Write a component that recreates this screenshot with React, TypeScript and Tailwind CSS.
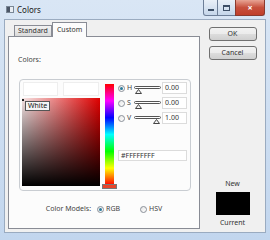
import React from 'react';

const font = "font-['Noto_Sans','Liberation_Sans',sans-serif]";

const Radio: React.FC<{ checked?: boolean }> = ({ checked }) => (
  <span className="w-[7px] h-[7px] rounded-full border border-[#8a8f98] bg-[linear-gradient(135deg,#e6e6e6,#ffffff)] flex items-center justify-center shrink-0">
    {checked && <span className="w-[3px] h-[3px] rounded-full bg-[#2b7a9c]" />}
  </span>
);

const Slider: React.FC<{ pos: 'left' | 'right' }> = ({ pos }) => (
  <div className={`w-[27px] h-[11px] flex flex-col ${pos === 'left' ? 'items-start' : 'items-end'}`}>
    <div className="w-[27px] h-[3px] mt-[3px] rounded-[2px] border border-[#555] bg-white" />
    <svg width="7" height="5" viewBox="0 0 7 5" className={pos === 'left' ? 'ml-[1px]' : 'mr-[1px]'}>
      <path d="M3.5 0.5 L6.5 4.5 L0.5 4.5 Z" fill="#f4f4f4" stroke="#444" strokeWidth="1" />
    </svg>
  </div>
);

const ValueRow: React.FC<{ letter: string; value: string; checked?: boolean; pos: 'left' | 'right' }> = ({
  letter,
  value,
  checked,
  pos,
}) => (
  <div className="flex items-center h-[12px]">
    <Radio checked={checked} />
    <span className="ml-[2px] w-[7px] text-[#444]">{letter}</span>
    <Slider pos={pos} />
    <div className="ml-[1px] w-[25px] h-[12px] border border-[#dcdcdc] bg-white pl-[2px] leading-[10px] text-[#333]">
      {value}
    </div>
  </div>
);

const App: React.FC = () => {
  return (
    <div className={`w-[270px] h-[240px] flex flex-col bg-[linear-gradient(to_bottom,#d9e6f5,#c2d6ee)] ${font} text-[7px] text-[#333] overflow-hidden`}>
      {/* title bar */}
      <div className="h-[19px] flex items-start">
        <div className="ml-[6px] mt-[6px] w-[8px] h-[7px] border border-[#7a8796] bg-[#e8edf3] flex">
          <div className="w-[3px] bg-[#4a5566]" />
        </div>
        <span className="ml-[3px] mt-[4px] text-[8px] leading-[12px] text-[#1a1a1a]">Colors</span>
        <div className="ml-auto mr-[5px] flex h-[16px]">
          <div className="w-[15px] border border-[#6d7f98] border-t-0 rounded-bl-[3px] bg-[linear-gradient(to_bottom,#e9f0f8,#c5d6ea)] flex items-end justify-center pb-[4px]">
            <div className="w-[6px] h-[2px] bg-[#3c4e66]" />
          </div>
          <div className="w-[17px] border-b border-[#6d7f98] bg-[linear-gradient(to_bottom,#e9f0f8,#c5d6ea)] flex items-center justify-center">
            <div className="w-[7px] h-[6px] border border-[#3c4e66] border-t-2" />
          </div>
          <div className="w-[30px] border border-[#8a3a2e] border-t-0 rounded-br-[3px] bg-[linear-gradient(to_bottom,#e8a494,#c7503d_50%,#c03f2a)] flex items-center justify-center text-white text-[9px] font-bold leading-none">
            ×
          </div>
        </div>
      </div>

      {/* client area */}
      <div className="mx-[4px] h-[214px] border border-[#9aabc0] bg-[#f0f0f0] flex">
        {/* tab control */}
        <div className="ml-[3px] mt-[2px] w-[192px] flex flex-col">
          <div className="h-[14px] flex items-end pl-[6px]">
            <div className="h-[11px] px-[3px] border border-[#898c95] border-b-0 bg-[linear-gradient(to_bottom,#f2f2f2,#dadada)] leading-[10px]">
              Standard
            </div>
            <div className="relative z-10 -mb-px h-[15px] px-[4px] border border-[#898c95] border-b-0 bg-[#fcfcfc] leading-[13px]">
              Custom
            </div>
          </div>
          <div className="h-[193px] border border-[#898c95] bg-[#fcfcfc] flex flex-col">
            <span className="ml-[9px] mt-[18px] leading-[9px] text-[#444]">Colors:</span>
            {/* picker group */}
            <div className="ml-[10px] mt-[15px] w-[172px] h-[112px] rounded-[4px] border border-[#c9cdd2] flex pl-[2px] pt-[2px]">
              <div className="w-[78px] flex flex-col">
                <div className="flex gap-[5px] ml-[1px]">
                  <div className="w-[35px] h-[14px] bg-white border border-[#eeeeee]" />
                  <div className="w-[36px] h-[14px] bg-white border border-[#eeeeee]" />
                </div>
                <div className="relative mt-[2px] w-[78px] h-[88px] bg-[linear-gradient(to_top,#000,transparent),linear-gradient(to_right,#f6e6e6,#e00000)]">
                  <div className="absolute left-0 top-[1px] w-[2px] h-[2px] bg-[#222]" />
                  <div className="absolute left-[3px] top-[3px] h-[10px] px-[2px] border border-[#555] bg-[#f4f4f4] leading-[8px] text-[#111]">
                    White
                  </div>
                </div>
              </div>
              <div className="ml-[5px] mt-[2px] w-[9px] h-[105px] relative">
                <div className="w-[9px] h-[101px] bg-[linear-gradient(to_bottom,#f00,#f0f,#00f,#0ff,#0f0,#ff0,#f00)]" />
                <div className="absolute left-[-3px] top-[100px] w-[15px] h-[5px] border border-[#777] bg-[#e8442a]" />
              </div>
              <div className="ml-[4px] flex flex-col">
                <div className="flex flex-col gap-[3px]">
                  <ValueRow letter="H" value="0.00" checked pos="left" />
                  <ValueRow letter="S" value="0.00" pos="left" />
                  <ValueRow letter="V" value="1.00" pos="right" />
                </div>
                <div className="mt-[26px] w-[69px] h-[11px] border border-[#dcdcdc] bg-white pl-[2px] leading-[9px]">
                  #FFFFFFFF
                </div>
              </div>
            </div>
            <div className="mt-[13px] flex items-center justify-center text-[#444]">
              <span>Color Models:</span>
              <span className="ml-[6px]">
                <Radio checked />
              </span>
              <span className="ml-[2px]">RGB</span>
              <span className="ml-[20px]">
                <Radio />
              </span>
              <span className="ml-[2px]">HSV</span>
            </div>
          </div>
        </div>

        {/* right column */}
        <div className="flex-1 flex flex-col items-center pt-[7px]">
          <button className="w-[48px] h-[14px] rounded-[3px] border border-[#707070] bg-[linear-gradient(to_bottom,#f2f2f2,#ebebeb_50%,#dddddd_50%,#cfcfcf)] leading-[12px] text-[#333]">
            OK
          </button>
          <button className="mt-[5px] w-[48px] h-[14px] rounded-[3px] border border-[#707070] bg-[linear-gradient(to_bottom,#f2f2f2,#ebebeb_50%,#dddddd_50%,#cfcfcf)] leading-[12px] text-[#333]">
            Cancel
          </button>
          <span className="mt-auto leading-[8px]">New</span>
          <div className="mt-[4px] w-[34px] h-[23px] bg-black" />
          <span className="mt-[4px] mb-[5px] leading-[8px]">Current</span>
        </div>
      </div>
    </div>
  );
};

export default App;
